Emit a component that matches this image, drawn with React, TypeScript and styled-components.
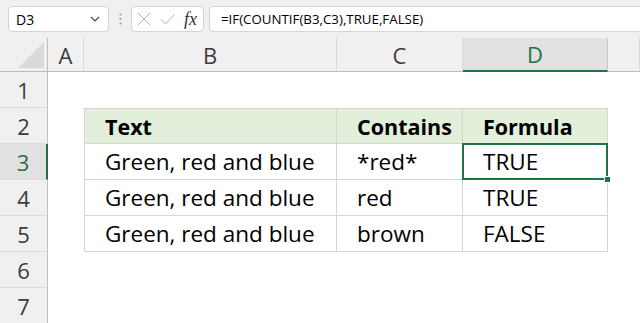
import * as React from "react";
import styled, { createGlobalStyle, css } from "styled-components";

const GREEN = "#217346";

const GlobalStyle = createGlobalStyle`
	html, body {
		margin: 0;
		padding: 0;
		background: #fff;
	}
	body {
		font-family: "Open Sans", "Noto Sans", sans-serif;
	}
`;

const Window = styled.div`
	width: 640px;
	height: 323px;
	overflow: hidden;
	display: flex;
	flex-direction: column;
	background: #fff;
`;

const FormulaBar = styled.div`
	height: 38px;
	flex: none;
	display: flex;
	align-items: center;
	padding-left: 8px;
	background: #f0f0f0;
	box-sizing: border-box;
`;

const Field = styled.div`
	height: 26px;
	box-sizing: border-box;
	border: 1px solid #d4d4d4;
	border-radius: 4px;
	background: #fff;
	display: flex;
	align-items: center;
`;

const NameBox = styled(Field)`
	width: 101px;
	padding: 0 8px 0 7px;
	justify-content: space-between;
	font-size: 14px;
	color: #000;
`;

const Grip = styled.div`
	width: 22px;
	display: flex;
	justify-content: center;
`;

const FxBox = styled(Field)`
	width: 73px;
	padding: 0 4px 0 5px;
	justify-content: space-between;
`;

const FxLabel = styled.span`
	font-family: "Liberation Serif", "DejaVu Serif", serif;
	font-style: italic;
	font-size: 18px;
	color: #333;
	padding-right: 2px;
`;

const FormulaInput = styled(Field)`
	flex: 1;
	margin-left: 5px;
	border-right: none;
	border-radius: 4px 0 0 4px;
	padding-left: 11px;
	font-size: 13.3px;
	color: #000;
`;

const Sheet = styled.div`
	flex: 1;
	display: grid;
	grid-template-columns: 48px 36px 253px 126px 145px 1fr;
	grid-template-rows: 34px;
	grid-auto-rows: 36px;
`;

const Corner = styled.div`
	background: #f0f0f0;
	border-right: 1px solid #bdbdbd;
	border-bottom: 1px solid #bdbdbd;
	box-sizing: border-box;
	display: flex;
	align-items: flex-end;
	justify-content: flex-end;
	padding: 0 3px 3px 0;
`;

const ColHeader = styled.div<{ $active?: boolean }>`
	background: #f0f0f0;
	border-right: 1px solid #d9d9d9;
	border-bottom: 1px solid #bdbdbd;
	box-sizing: border-box;
	display: flex;
	align-items: center;
	justify-content: center;
	font-size: 22px;
	color: #3b3b3b;
	${(p) =>
		p.$active &&
		css`
			background: #e1e1e1;
			color: ${GREEN};
			border-right-color: #c6c6c6;
			border-bottom: 2px solid ${GREEN};
		`}
`;

const RowHeader = styled.div<{ $active?: boolean }>`
	background: #f0f0f0;
	border-right: 1px solid #bdbdbd;
	border-bottom: 1px solid #dcdcdc;
	box-sizing: border-box;
	display: flex;
	align-items: center;
	justify-content: center;
	font-size: 22px;
	color: #3b3b3b;
	${(p) =>
		p.$active &&
		css`
			background: #e1e1e1;
			color: ${GREEN};
			border-right: 2px solid ${GREEN};
		`}
`;

const Cell = styled.div<{
	$table?: boolean;
	$head?: boolean;
	$first?: boolean;
	$selected?: boolean;
}>`
	position: relative;
	box-sizing: border-box;
	display: flex;
	align-items: center;
	padding-left: 20px;
	font-size: 22.5px;
	color: #000;
	white-space: nowrap;
	${(p) =>
		p.$table &&
		css`
			border-right: 1px solid #d6d6d6;
			border-bottom: 1px solid #d6d6d6;
		`}
	${(p) =>
		p.$first &&
		css`
			border-left: 1px solid #d6d6d6;
		`}
	${(p) =>
		p.$head &&
		css`
			background: #e2efda;
			font-weight: 700;
			font-size: 21.5px;
			border-top: 1px solid #d6d6d6;
		`}
	${(p) =>
		p.$selected &&
		css`
			&::after {
				content: "";
				position: absolute;
				top: -1px;
				left: -1px;
				right: -1px;
				bottom: -1px;
				border: 2px solid ${GREEN};
			}
			&::before {
				content: "";
				position: absolute;
				right: -4px;
				bottom: -4px;
				width: 5px;
				height: 5px;
				background: ${GREEN};
				border: 1px solid #fff;
				z-index: 1;
			}
		`}
`;

const rows: (string[] | null)[] = [
	null,
	["Text", "Contains", "Formula"],
	["Green, red and blue", "*red*", "TRUE"],
	["Green, red and blue", "red", "TRUE"],
	["Green, red and blue", "brown", "FALSE"],
	null,
	null,
];

export default function App() {
	return (
		<Window>
			<GlobalStyle />
			<FormulaBar>
				<NameBox>
					<span>D3</span>
					<svg width="10" height="6" viewBox="0 0 10 6">
						<path d="M1 1 L5 5 L9 1" fill="none" stroke="#444" strokeWidth="1.1" />
					</svg>
				</NameBox>
				<Grip>
					<svg width="3" height="12" viewBox="0 0 3 12">
						<circle cx="1.5" cy="1.5" r="1.1" fill="#9a9a9a" />
						<circle cx="1.5" cy="6" r="1.1" fill="#9a9a9a" />
						<circle cx="1.5" cy="10.5" r="1.1" fill="#9a9a9a" />
					</svg>
				</Grip>
				<FxBox>
					<svg width="14" height="14" viewBox="0 0 14 14">
						<path d="M1 1 L13 13 M13 1 L1 13" stroke="#b4b4b4" strokeWidth="1" />
					</svg>
					<svg width="15" height="11" viewBox="0 0 15 11">
						<path d="M1 5.5 L5.5 10 L14 1" fill="none" stroke="#b4b4b4" strokeWidth="1" />
					</svg>
					<FxLabel>fx</FxLabel>
				</FxBox>
				<FormulaInput>=IF(COUNTIF(B3,C3),TRUE,FALSE)</FormulaInput>
			</FormulaBar>
			<Sheet>
				<Corner>
					<svg width="26" height="26" viewBox="0 0 26 26">
						<path d="M26 0 L26 26 L0 26 Z" fill="#dadada" />
					</svg>
				</Corner>
				{["A", "B", "C", "D", ""].map((c) => (
					<ColHeader key={c || "E"} $active={c === "D"}>
						{c}
					</ColHeader>
				))}
				{rows.map((row, i) => {
					const n = i + 1;
					return (
						<React.Fragment key={n}>
							<RowHeader $active={n === 3}>{n}</RowHeader>
							<Cell />
							{row ? (
								row.map((v, j) => (
									<Cell
										key={j}
										$table
										$head={n === 2}
										$first={j === 0}
										$selected={n === 3 && j === 2}
									>
										{v}
									</Cell>
								))
							) : (
								<>
									<Cell />
									<Cell />
									<Cell />
								</>
							)}
							<Cell />
						</React.Fragment>
					);
				})}
			</Sheet>
		</Window>
	);
}
